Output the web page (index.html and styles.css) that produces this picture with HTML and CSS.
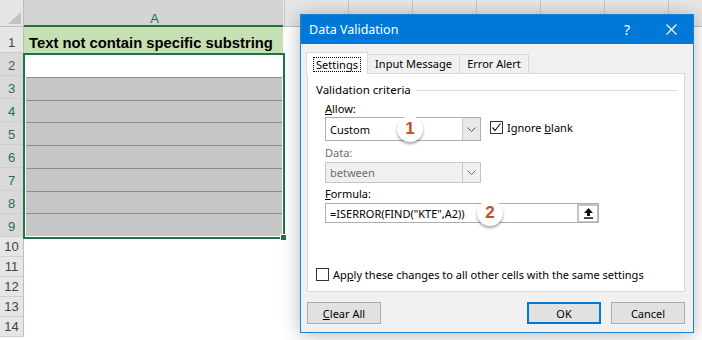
FILE: index.html
```html
<!DOCTYPE html>
<html lang="en">
<head>
    <meta charset="UTF-8">
    <title>Data Validation</title>
    <link rel="stylesheet" href="styles.css">
</head>
<body>
    <div class="sheet">
        <div class="corner">
            <svg width="14" height="13" viewBox="0 0 14 13"><polygon points="13,0 13,12 0,12" fill="#c3c3c3"/></svg>
        </div>
        <div class="col-head selected">A</div>
        <div class="col-head rest"></div>

        <div class="row-head">1</div>
        <div class="row-head sel">2</div>
        <div class="row-head sel">3</div>
        <div class="row-head sel">4</div>
        <div class="row-head sel">5</div>
        <div class="row-head sel">6</div>
        <div class="row-head sel">7</div>
        <div class="row-head sel">8</div>
        <div class="row-head sel">9</div>
        <div class="row-head">10</div>
        <div class="row-head">11</div>
        <div class="row-head">12</div>
        <div class="row-head">13</div>
        <div class="row-head">14</div>

        <div class="title-cell">Text not contain specific substring</div>

        <div class="selection">
            <div class="sel-row active"></div>
            <div class="sel-row"></div>
            <div class="sel-row"></div>
            <div class="sel-row"></div>
            <div class="sel-row"></div>
            <div class="sel-row"></div>
            <div class="sel-row"></div>
            <div class="sel-row"></div>
            <div class="fill-handle"></div>
        </div>
    </div>

    <div class="dialog">
        <div class="titlebar">
            <span class="title">Data Validation</span>
            <span class="tb-btn">?</span>
            <span class="tb-btn">
                <svg width="11" height="11" viewBox="0 0 11 11"><path d="M0.5 0.5 L10.5 10.5 M10.5 0.5 L0.5 10.5" stroke="#fff" stroke-width="1.1"/></svg>
            </span>
        </div>

        <div class="body">
            <div class="tabs">
                <div class="tab active"><span class="focus">Settings</span></div>
                <div class="tab tab-input">Input Message</div>
                <div class="tab tab-error">Error Alert</div>
            </div>

            <div class="panel">
                <div class="group-title">
                    <span>Validation criteria</span>
                    <span class="rule"></span>
                </div>

                <div class="fields">
                    <div class="label"><u>A</u>llow:</div>
                    <div class="line">
                        <div class="combo">
                            <span class="combo-text">Custom</span>
                            <span class="combo-arrow">
                                <svg width="9" height="5" viewBox="0 0 9 5"><polyline points="0.5,0.5 4.5,4.5 8.5,0.5" fill="none" stroke="#555" stroke-width="1"/></svg>
                            </span>
                            <span class="badge badge-one">1</span>
                        </div>
                        <div class="check">
                            <span class="box">
                                <svg width="11" height="11" viewBox="0 0 11 11"><polyline points="1.5,5.5 4,8.5 9.5,1.5" fill="none" stroke="#222" stroke-width="1.2"/></svg>
                            </span>
                            <span>Ignore <u>b</u>lank</span>
                        </div>
                    </div>

                    <div class="label muted">Data:</div>
                    <div class="combo disabled">
                        <span class="combo-text">between</span>
                        <span class="combo-arrow">
                            <svg width="9" height="5" viewBox="0 0 9 5"><polyline points="0.5,0.5 4.5,4.5 8.5,0.5" fill="none" stroke="#666" stroke-width="1"/></svg>
                        </span>
                    </div>

                    <div class="label"><u>F</u>ormula:</div>
                    <div class="formula">
                        <span class="formula-text">=ISERROR(FIND("KTE",A2))</span>
                        <span class="pick">
                            <svg width="9" height="11" viewBox="0 0 9 11"><polygon points="4.5,0 9,5 6,5 6,8 3,8 3,5 0,5" fill="#111"/><rect x="0" y="9.3" width="9" height="1.5" fill="#111"/></svg>
                        </span>
                        <span class="badge badge-two">2</span>
                    </div>
                </div>

                <div class="check apply">
                    <span class="box"></span>
                    <span>Ap<u>p</u>ly these changes to all other cells with the same settings</span>
                </div>
            </div>

            <div class="buttons">
                <div class="btn"><u>C</u>lear All</div>
                <div class="spacer"></div>
                <div class="btn default">OK</div>
                <div class="btn">Cancel</div>
            </div>
        </div>
    </div>
</body>
</html>
```

FILE: styles.css
```css
body {
    margin: 0;
    width: 702px;
    height: 340px;
    overflow: hidden;
    background: #fff;
    font-family: "Liberation Sans", Arial, sans-serif;
    position: relative;
}

/* spreadsheet */
.sheet {
    display: grid;
    grid-template-columns: 24px 259px 1fr;
    grid-template-rows: 27px 26px repeat(8, 23px) repeat(5, 20px);
}
.corner {
    grid-row: 1;
    grid-column: 1;
    background: #e6e6e6;
    border-right: 1px solid #bdbdbd;
    border-bottom: 1px solid #bdbdbd;
    box-sizing: border-box;
    display: flex;
    align-items: flex-end;
    justify-content: flex-end;
    padding: 0 1px 1px 0;
}
.col-head {
    grid-row: 1;
    box-sizing: border-box;
    font-size: 13px;
    color: #444;
}
.col-head.selected {
    grid-column: 2;
    background: #d4d4d4;
    border-bottom: 2px solid #217346;
    color: #217346;
    text-align: center;
    line-height: 15px;
    padding-top: 11px;
    padding-left: 2px;
}
.col-head.rest {
    grid-column: 3;
    background-color: #e6e6e6;
    background-image: linear-gradient(to right, transparent 63px, #c8c8c8 63px);
    background-size: 64px 100%;
    background-position: 2px 0;
    border-bottom: 1px solid #bdbdbd;
}
.row-head {
    grid-column: 1;
    background: #e6e6e6;
    border-right: 1px solid #bdbdbd;
    border-bottom: 1px solid #cfcfcf;
    box-sizing: border-box;
    font-size: 13px;
    line-height: 15px;
    color: #444;
    display: flex;
    align-items: flex-end;
    justify-content: center;
    padding-bottom: 2px;
}
.row-head.sel {
    background: #d9d9d9;
    color: #217346;
}
.title-cell {
    grid-row: 2;
    grid-column: 2;
    background: #c6e0b4;
    font-weight: bold;
    font-size: 14.8px;
    color: #000;
    padding: 8px 0 0 5px;
    white-space: nowrap;
}
.selection {
    grid-row: 3 / 11;
    grid-column: 2;
    margin: 0 -2px -2px -1px;
    border: 2px solid #217346;
    padding: 1px;
    background: #fff;
    display: flex;
    flex-direction: column;
    position: relative;
}
.sel-row {
    flex: 1;
    background: #c6c6c6;
    border-top: 1px solid #8c8c8c;
}
.sel-row.active {
    flex: 0 0 21px;
    background: #fff;
    border-top: none;
}
.fill-handle {
    position: absolute;
    right: -4px;
    bottom: -4px;
    width: 5px;
    height: 5px;
    background: #217346;
    border: 1px solid #fff;
}

/* dialog */
.dialog {
    position: absolute;
    left: 300px;
    top: 14px;
    width: 394px;
    height: 319px;
    box-sizing: border-box;
    border: 1px solid #1883d7;
    background: #f0f0f0;
    box-shadow: 0 2px 18px rgba(0, 0, 0, 0.28);
    display: flex;
    flex-direction: column;
    font-family: "Noto Sans", sans-serif;
    font-size: 11px;
    color: #000;
}
.titlebar {
    height: 29px;
    background: #0078d7;
    color: #fff;
    display: flex;
    align-items: center;
    padding-left: 8px;
}
.title {
    flex: 1;
    font-size: 12.5px;
}
.tb-btn {
    width: 44px;
    text-align: center;
    font-size: 14px;
    display: flex;
    justify-content: center;
    align-items: center;
}
.body {
    flex: 1;
    padding: 8px 8px 0 6px;
    display: flex;
    flex-direction: column;
}
.tabs {
    display: flex;
    align-items: flex-end;
    height: 21px;
    margin-left: -1px;
    position: relative;
    z-index: 1;
}
.tab {
    height: 19px;
    box-sizing: border-box;
    border: 1px solid #d9d9d9;
    border-bottom: none;
    border-left: none;
    background: #f0f0f0;
    text-align: center;
    line-height: 18px;
}
.tab.active {
    width: 62px;
    height: 22px;
    margin-bottom: -1px;
    background: #fff;
    border-left: 1px solid #d9d9d9;
    padding-top: 3px;
}
.focus {
    border: 1px dotted #000;
    padding: 0 2px;
    line-height: 13px;
    display: inline-block;
}
.tab-input {
    width: 92px;
}
.tab-error {
    width: 69px;
}
.panel {
    height: 219px;
    box-sizing: border-box;
    background: #fff;
    border: 1px solid #d9d9d9;
    padding: 8px 6px 8px 8px;
    display: flex;
    flex-direction: column;
}
.group-title {
    display: flex;
    align-items: center;
    gap: 6px;
    line-height: 16px;
    font-size: 11.5px;
}
.rule {
    flex: 1;
    height: 1px;
    background: #dcdcdc;
}
.fields {
    padding-left: 9px;
}
.label {
    line-height: 15px;
    margin-top: 3px;
}
.label.muted {
    color: #6d6d6d;
    margin-top: 4px;
}
.line {
    display: flex;
    align-items: flex-start;
    gap: 9px;
}
.combo {
    width: 156px;
    height: 24px;
    box-sizing: border-box;
    border: 1px solid #adadad;
    background: #fff;
    display: flex;
    align-items: stretch;
    position: relative;
    margin-top: 1px;
}
.combo-text {
    flex: 1;
    padding-left: 4px;
    display: flex;
    align-items: center;
}
.combo-arrow {
    width: 17px;
    background: #e8e8e8;
    border-left: 1px solid #c8c8c8;
    display: flex;
    align-items: center;
    justify-content: center;
}
.combo.disabled {
    height: 21px;
    margin-top: 2px;
    background: #f0f0f0;
    border-color: #c6c6c6;
    color: #6d6d6d;
}
.combo.disabled .combo-arrow {
    background: #f0f0f0;
    border-left-color: #c6c6c6;
}
.check {
    display: flex;
    align-items: center;
    gap: 4px;
    margin-top: 4px;
}
.box {
    width: 13px;
    height: 13px;
    box-sizing: border-box;
    border: 1px solid #333;
    background: #fff;
    display: flex;
    align-items: center;
    justify-content: center;
}
.formula {
    width: 274px;
    height: 20px;
    box-sizing: border-box;
    border: 1px solid #adadad;
    background: #fff;
    display: flex;
    margin-top: 2px;
    position: relative;
}
.formula-text {
    flex: 1;
    padding-left: 4px;
    display: flex;
    align-items: center;
}
.pick {
    width: 21px;
    box-sizing: border-box;
    border: 2px solid #c4c4c4;
    border-right-width: 1px;
    border-bottom-width: 1px;
    display: flex;
    align-items: center;
    justify-content: center;
}
.badge {
    position: absolute;
    width: 26px;
    height: 26px;
    border-radius: 50%;
    background: #fff;
    box-shadow: 0 2px 3px rgba(0, 0, 0, 0.35);
    color: #c0501e;
    font-family: "Liberation Sans", Arial, sans-serif;
    font-weight: bold;
    font-size: 17px;
    display: flex;
    align-items: center;
    justify-content: center;
}
.badge-one {
    left: 71px;
    top: -2px;
}
.badge-two {
    left: 151px;
    top: -4px;
}
.apply {
    margin-top: auto;
    margin-bottom: 1px;
}
.buttons {
    display: flex;
    gap: 10px;
    margin-top: 10px;
    margin-left: 0;
}
.spacer {
    flex: 1;
}
.btn {
    width: 74px;
    height: 22px;
    box-sizing: border-box;
    border: 1px solid #adadad;
    background: #e1e1e1;
    display: flex;
    align-items: center;
    justify-content: center;
}
.btn.default {
    border: 2px solid #0078d7;
}
```
